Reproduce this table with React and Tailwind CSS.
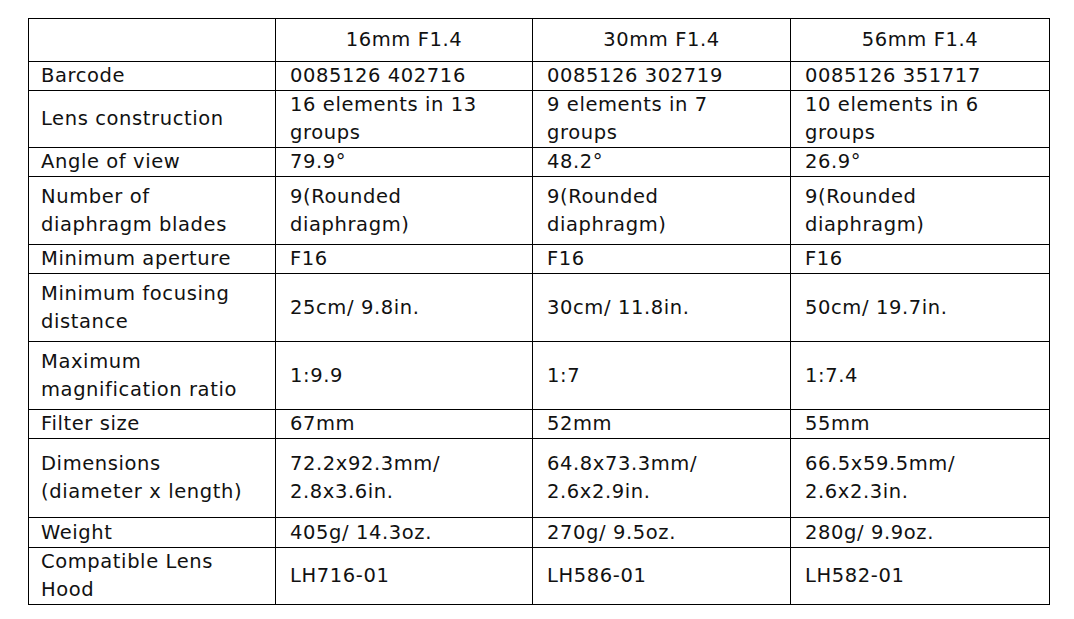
const rows = [
  { h: 'h-[29px]', label: ['Barcode'], vals: [['0085126 402716'], ['0085126 302719'], ['0085126 351717']] },
  {
    h: 'h-[57px]',
    label: ['Lens construction'],
    vals: [
      ['16 elements in 13', 'groups'],
      ['9 elements in 7', 'groups'],
      ['10 elements in 6', 'groups'],
    ],
  },
  { h: 'h-[29px]', label: ['Angle of view'], vals: [['79.9°'], ['48.2°'], ['26.9°']] },
  {
    h: 'h-[68px]',
    label: ['Number of', 'diaphragm blades'],
    vals: [
      ['9(Rounded', 'diaphragm)'],
      ['9(Rounded', 'diaphragm)'],
      ['9(Rounded', 'diaphragm)'],
    ],
  },
  { h: 'h-[29px]', label: ['Minimum aperture'], vals: [['F16'], ['F16'], ['F16']] },
  {
    h: 'h-[68px]',
    label: ['Minimum focusing', 'distance'],
    vals: [['25cm/ 9.8in.'], ['30cm/ 11.8in.'], ['50cm/ 19.7in.']],
  },
  {
    h: 'h-[68px]',
    label: ['Maximum', 'magnification ratio'],
    vals: [['1:9.9'], ['1:7'], ['1:7.4']],
  },
  { h: 'h-[29px]', label: ['Filter size'], vals: [['67mm'], ['52mm'], ['55mm']] },
  {
    h: 'h-[79px]',
    label: ['Dimensions', '(diameter x length)'],
    vals: [
      ['72.2x92.3mm/', '2.8x3.6in.'],
      ['64.8x73.3mm/', '2.6x2.9in.'],
      ['66.5x59.5mm/', '2.6x2.3in.'],
    ],
  },
  { h: 'h-[30px]', label: ['Weight'], vals: [['405g/ 14.3oz.'], ['270g/ 9.5oz.'], ['280g/ 9.9oz.']] },
  {
    h: 'h-[57px]',
    label: ['Compatible Lens', 'Hood'],
    vals: [['LH716-01'], ['LH586-01'], ['LH582-01']],
  },
];

function Lines({ lines }) {
  return lines.map((line, i) => (
    <span key={i} className="block whitespace-nowrap">
      {line}
    </span>
  ));
}

export default function App() {
  return (
    <div
      className="min-h-screen w-[1074px] h-[619px] bg-white pt-[18px] pl-[28px] text-[#111]"
      style={{ fontFamily: '"DejaVu Sans", "Noto Sans", Arial, sans-serif' }}
    >
      <table className="table-fixed border-collapse w-[1021px] text-[19.5px] leading-[28px] tracking-[0.6px]">
        <colgroup>
          <col className="w-[247px]" />
          <col className="w-[257px]" />
          <col className="w-[258px]" />
          <col className="w-[259px]" />
        </colgroup>
        <thead>
          <tr className="h-[43px]">
            <th className="border border-black p-0" />
            {['16mm F1.4', '30mm F1.4', '56mm F1.4'].map((t) => (
              <th key={t} className="border border-black p-0 font-normal text-center align-middle">
                {t}
              </th>
            ))}
          </tr>
        </thead>
        <tbody>
          {rows.map((row, i) => (
            <tr key={i} className={row.h}>
              <td className="border border-black py-0 pl-3 pr-1 align-middle">
                <Lines lines={row.label} />
              </td>
              {row.vals.map((v, j) => (
                <td key={j} className="border border-black py-0 pl-3.5 pr-1 align-middle">
                  <Lines lines={v} />
                </td>
              ))}
            </tr>
          ))}
        </tbody>
      </table>
    </div>
  );
}
